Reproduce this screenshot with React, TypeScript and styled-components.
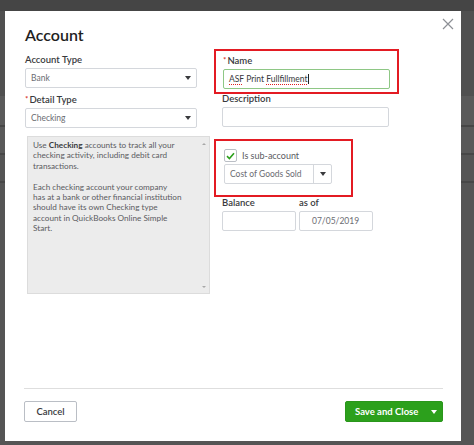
import React from 'react'
import styled, { createGlobalStyle } from 'styled-components'

const GlobalStyle = createGlobalStyle`
  html, body {
    margin: 0;
    padding: 0;
    background: #575757;
  }
  body {
    font-family: Lato, "Open Sans", sans-serif;
    color: #393a3d;
  }
`

const Backdrop = styled.div`
  position: relative;
  width: 474px;
  height: 445px;
  overflow: hidden;
  background: linear-gradient(
    to bottom,
    #454545 0px,
    #454545 11px,
    #505050 11px,
    #505050 96px,
    #5a5a5a 96px,
    #5a5a5a 125px,
    #464646 125px,
    #464646 127px,
    #595959 127px,
    #595959 153px,
    #474747 153px,
    #474747 155px,
    #555555 155px,
    #555555 181px,
    #474747 181px,
    #474747 183px,
    #555555 183px
  );
  padding: 11px 0 0 5px;
  box-sizing: border-box;
`

const Modal = styled.div`
  position: relative;
  width: 456px;
  height: 430px;
  background: #fff;
  box-sizing: border-box;
  padding: 14px 18px 19px 20px;
  display: flex;
  flex-direction: column;
`

const Title = styled.h1`
  margin: 0;
  font-size: 16px;
  line-height: 20px;
  font-weight: 600;
  color: #1f1f1f;
`

const CloseButton = styled.button`
  position: absolute;
  top: 3px;
  right: 3px;
  width: 20px;
  height: 20px;
  border: 0;
  background: none;
  padding: 0;
  display: flex;
  align-items: center;
  justify-content: center;
`

const Body = styled.div`
  display: flex;
  margin-top: 4px;
  flex: 1;
`

const LeftColumn = styled.div`
  width: 188px;
  display: flex;
  flex-direction: column;
`

const RightColumn = styled.div`
  display: flex;
  flex-direction: column;
  margin-left: 1px;
`

const Label = styled.div<{ $top?: number }>`
  font-size: 9.5px;
  line-height: 14px;
  font-weight: 600;
  color: #393a3d;
  margin-top: ${({ $top }) => $top ?? 4}px;
  margin-bottom: 1px;
  white-space: nowrap;
`

const Star = styled.span`
  color: #d52b1e;
  font-size: 8px;
  margin-right: 1px;
  vertical-align: 1px;
`

const Box = styled.div<{ $w: number; $focus?: boolean; $indent?: number }>`
  width: ${({ $w }) => $w}px;
  height: 20px;
  box-sizing: border-box;
  border: 1px solid ${({ $focus }) => ($focus ? '#8ec785' : '#d4d7dc')};
  border-radius: 2px;
  background: #fff;
  display: flex;
  align-items: center;
  font-size: 8.5px;
  color: #6b6c72;
  padding-left: ${({ $indent }) => $indent ?? 5}px;
`

const SelectText = styled.span`
  flex: 1;
`

const Caret = styled.span<{ $split?: boolean }>`
  width: 17px;
  height: 100%;
  display: flex;
  align-items: center;
  justify-content: center;
  border-left: ${({ $split }) => ($split ? '1px solid #d4d7dc' : '0')};
  &::after {
    content: '';
    border-left: 3px solid transparent;
    border-right: 3px solid transparent;
    border-top: 4px solid #393a3d;
  }
`

const InfoBox = styled.div`
  position: relative;
  margin: 8px 0 0 2px;
  width: 183px;
  height: 158px;
  box-sizing: border-box;
  background: #ececec;
  border: 1px solid #dcdcdc;
  padding: 3px 12px 0 5px;
  font-size: 8.2px;
  line-height: 10.4px;
  color: #5a5b5f;
`

const Para = styled.p`
  margin: 0 0 10.4px 0;
  white-space: nowrap;
  b {
    color: #393a3d;
    font-weight: 700;
  }
`

const ScrollArrow = styled.span<{ $down?: boolean }>`
  position: absolute;
  right: 3px;
  ${({ $down }) => ($down ? 'bottom: 5px;' : 'top: 6px;')}
  border-left: 2px solid transparent;
  border-right: 2px solid transparent;
  ${({ $down }) =>
    $down ? 'border-top: 2px solid #a8a8a8;' : 'border-bottom: 2px solid #a8a8a8;'}
`

const Highlight = styled.div<{ $w: number }>`
  width: ${({ $w }) => $w}px;
  box-sizing: border-box;
  border: 2px solid #e31b23;
  padding: 0 0 3px 7px;
`

const SubBox = styled(Highlight)`
  margin-top: 12px;
  padding: 8px 0 11px 8px;
`

const Row = styled.div<{ $gap?: number }>`
  display: flex;
  gap: ${({ $gap }) => $gap ?? 0}px;
  margin-left: 8px;
`

const CheckRow = styled.div`
  display: flex;
  align-items: center;
  gap: 5px;
  height: 13px;
  font-size: 9px;
  color: #5a5b5f;
  margin-bottom: 2px;
`

const Check = styled.span`
  width: 13px;
  height: 13px;
  box-sizing: border-box;
  border: 1px solid #babec5;
  border-radius: 2px;
  background: #fff;
  display: flex;
  align-items: center;
  justify-content: center;
`

const NameText = styled.span`
  color: #393a3d;
`

const Misspelled = styled.span`
  text-decoration: underline dotted #e02020;
  text-decoration-thickness: 1px;
  text-underline-offset: 2px;
`

const Cursor = styled.span`
  display: inline-block;
  width: 1px;
  height: 10px;
  background: #222;
  vertical-align: -2px;
`

const Field = styled.div`
  display: flex;
  flex-direction: column;
`

const Footer = styled.div`
  border-top: 1px solid #dedede;
  margin-left: -1px;
  padding-top: 12px;
  display: flex;
  justify-content: space-between;
`

const Button = styled.button`
  height: 21px;
  box-sizing: border-box;
  border-radius: 2px;
  font-family: Lato, "Open Sans", sans-serif;
  font-size: 9.5px;
  font-weight: 600;
  padding: 0;
  display: flex;
  align-items: center;
`

const CancelButton = styled(Button)`
  width: 53px;
  justify-content: center;
  background: #fff;
  border: 1px solid #babec5;
  color: #393a3d;
`

const SaveButton = styled(Button)`
  width: 98px;
  background: #2ca01c;
  border: 1px solid #2a961b;
  color: #fff;
  font-weight: 700;
  padding-left: 9px;
`

const SaveLabel = styled.span`
  flex: 1;
  text-align: left;
`

const SaveCaret = styled.span`
  width: 17px;
  display: flex;
  justify-content: center;
  &::after {
    content: '';
    border-left: 3px solid transparent;
    border-right: 3px solid transparent;
    border-top: 4px solid #fff;
  }
`

export default function App() {
  return (
    <>
      <GlobalStyle />
      <Backdrop>
        <Modal>
          <Title>Account</Title>
          <CloseButton aria-label="Close">
            <svg width="12" height="12" viewBox="0 0 12 12">
              <path d="M1 1 L11 11 M11 1 L1 11" stroke="#8d9096" strokeWidth="1.2" fill="none" />
            </svg>
          </CloseButton>
          <Body>
            <LeftColumn>
              <Field>
                <Label>Account Type</Label>
                <Box $w={172}>
                  <SelectText>Bank</SelectText>
                  <Caret />
                </Box>
              </Field>
              <Field>
                <Label>
                  <Star>*</Star>Detail Type
                </Label>
                <Box $w={172}>
                  <SelectText>Checking</SelectText>
                  <Caret />
                </Box>
              </Field>
              <InfoBox>
                <Para>
                  Use <b>Checking</b> accounts to track all your
                  <br />
                  checking activity, including debit card
                  <br />
                  transactions.
                </Para>
                <Para>
                  Each checking account your company
                  <br />
                  has at a bank or other financial institution
                  <br />
                  should have its own Checking type
                  <br />
                  account in QuickBooks Online Simple
                  <br />
                  Start.
                </Para>
                <ScrollArrow />
                <ScrollArrow $down />
              </InfoBox>
            </LeftColumn>
            <RightColumn>
              <Highlight $w={185}>
                <Label $top={2}>
                  <Star>*</Star>Name
                </Label>
                <Box $w={167} $focus>
                  <NameText>
                    <Misspelled>ASF</Misspelled> Print <Misspelled>Fullfillment</Misspelled>
                    <Cursor />
                  </NameText>
                </Box>
              </Highlight>
              <Row>
                <Field>
                  <Label $top={-2}>Description</Label>
                  <Box $w={167} />
                </Field>
              </Row>
              <SubBox $w={139}>
                <CheckRow>
                  <Check>
                    <svg width="9" height="8" viewBox="0 0 9 8">
                      <path d="M1 4.2 L3.4 6.5 L8 1.2" stroke="#2ca01c" strokeWidth="1.6" fill="none" />
                    </svg>
                  </Check>
                  Is sub-account
                </CheckRow>
                <Box $w={108}>
                  <SelectText>Cost of Goods Sold</SelectText>
                  <Caret $split />
                </Box>
              </SubBox>
              <Row $gap={3}>
                <Field>
                  <Label $top={-1}>Balance</Label>
                  <Box $w={74} />
                </Field>
                <Field>
                  <Label $top={-1}>as of</Label>
                  <Box $w={74} $indent={12}>
                    07/05/2019
                  </Box>
                </Field>
              </Row>
            </RightColumn>
          </Body>
          <Footer>
            <CancelButton>Cancel</CancelButton>
            <SaveButton>
              <SaveLabel>Save and Close</SaveLabel>
              <SaveCaret />
            </SaveButton>
          </Footer>
        </Modal>
      </Backdrop>
    </>
  )
}
